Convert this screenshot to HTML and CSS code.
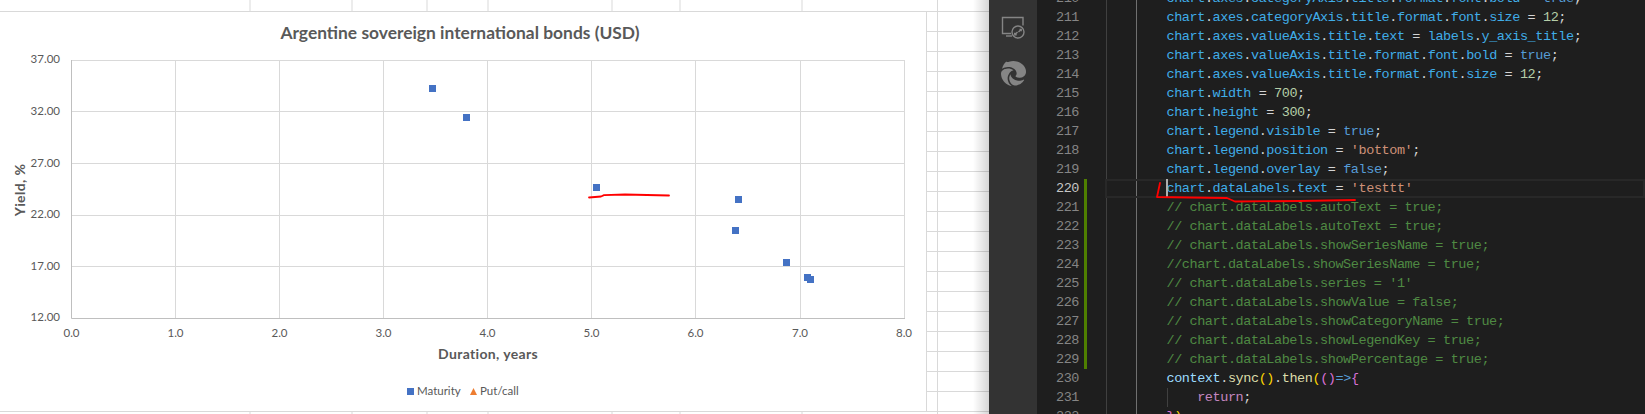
FILE: index.html
```html
<!DOCTYPE html>
<html lang="en">

<head>
    <meta charset="UTF-8">
    <title>Argentine sovereign international bonds</title>
    <link rel="stylesheet" href="styles.css">
</head>

<body>
    <div class="sheet">
        <svg class="sheet-canvas" width="989" height="414" viewBox="0 0 989 414">
            <!-- spreadsheet cells behind the chart -->
            <path class="cell-line" d="M250 0V11M352 0V11M427 0V11M488 0V11M612 0V11M680 0V11M802 0V11
                M250 411V414M352 411V414M427 411V414M488 411V414M612 411V414M680 411V414M802 411V414
                M937.5 0V414M926.5 11V411
                M0 11.5H989M0 411.5H989
                M926 31.5H989M926 51.5H989M926 71.5H989M926 91.5H989M926 111.5H989
                M926 131.5H989M926 151.5H989M926 171.5H989M926 191.5H989M926 211.5H989
                M926 231.5H989M926 251.5H989M926 271.5H989M926 291.5H989M926 311.5H989
                M926 331.5H989M926 351.5H989M926 371.5H989M926 391.5H989" />

            <text class="chart-title" x="460" y="39">Argentine sovereign international bonds (USD)</text>

            <path class="grid-line" d="M175.5 60V318M279.5 60V318M383.5 60V318M487.5 60V318M591.5 60V318M695.5 60V318M800.5 60V318M904.5 60V318
                M71 60.5H905M71 111.5H905M71 163.5H905M71 215.5H905M71 266.5H905" />
            <path class="axis-line" d="M71.5 60V318.5H905" />

            <g class="tick-y">
                <text x="60" y="63">37.00</text>
                <text x="60" y="115">32.00</text>
                <text x="60" y="167">27.00</text>
                <text x="60" y="218">22.00</text>
                <text x="60" y="270">17.00</text>
                <text x="60" y="321">12.00</text>
            </g>
            <g class="tick-x">
                <text x="71.5" y="337">0.0</text>
                <text x="175.5" y="337">1.0</text>
                <text x="279.5" y="337">2.0</text>
                <text x="383.5" y="337">3.0</text>
                <text x="487.5" y="337">4.0</text>
                <text x="591.5" y="337">5.0</text>
                <text x="695.5" y="337">6.0</text>
                <text x="800" y="337">7.0</text>
                <text x="904" y="337">8.0</text>
            </g>

            <text class="axis-title" x="488" y="359">Duration, years</text>
            <text class="axis-title" transform="translate(25 190) rotate(-90)">Yield, %</text>

            <g class="marker">
                <rect x="429" y="85" width="7" height="7" />
                <rect x="463" y="114" width="7" height="7" />
                <rect x="593" y="184" width="7" height="7" />
                <rect x="735" y="196" width="7" height="7" />
                <rect x="732" y="227" width="7" height="7" />
                <rect x="783" y="259" width="7" height="7" />
                <rect x="804" y="274" width="7" height="7" />
                <rect x="807" y="276" width="7" height="7" />
            </g>

            <rect class="legend-key" x="407" y="388" width="7" height="7" />
            <text class="legend-text" x="417" y="395">Maturity</text>
            <path class="legend-tri" d="M470 395L473.500 388L477 395Z" />
            <text class="legend-text" x="480" y="395">Put/call</text>
        </svg>
        <div class="sheet-shadow"></div>
    </div>

    <aside class="sidebar">
        <svg class="side-remote" width="26" height="26" viewBox="0 0 26 26">
            <path d="M11 18.500H2.500V2.500H23V10.500" />
            <path d="M6 21H12" />
            <circle cx="18" cy="17" r="6" />
            <path d="M15 19.500L17.500 17M21 14.500L18.500 17M19.500 14.500H21.200V16.200M14.800 17.800V19.700H16.700" />
        </svg>
        <svg class="side-edge" width="25" height="25" viewBox="0 0 24 24">
            <path d="M21.86 17.86q.14 0 .25.12.1.13.1.25t-.11.33l-.32.46-.43.53-.44.5q-.21.25-.38.42l-.22.23q-.58.53-1.34 1.04-.76.51-1.6.91-.86.4-1.74.64t-1.67.24q-.9 0-1.69-.28-.8-.28-1.48-.78-.68-.5-1.22-1.17-.53-.66-.92-1.44-.38-.77-.58-1.6-.2-.83-.2-1.67 0-1 .32-1.96.33-.97.87-1.8.14.95.55 1.77.41.82 1.02 1.5.6.68 1.38 1.21.78.54 1.64.9.86.36 1.77.56.92.2 1.8.2 1.12 0 2.18-.24 1.06-.23 2.06-.72l.2-.1.2-.05zm-15.5-1.27q0 1.1.27 2.15.27 1.06.78 2.03.51.96 1.24 1.77.74.82 1.66 1.4-1.47-.2-2.8-.74-1.33-.55-2.48-1.37-1.15-.83-2.08-1.9-.92-1.07-1.58-2.33T.36 14.94Q0 13.54 0 12.06q0-.81.32-1.49.31-.68.83-1.23.53-.55 1.2-.96.66-.4 1.35-.66.74-.27 1.5-.39.78-.12 1.55-.12.7 0 1.42.1.72.12 1.4.35.68.23 1.32.57.63.35 1.16.83-.35 0-.7.07-.33.07-.65.23v-.02q-.63.28-1.2.74-.57.46-1.05 1.04-.48.58-.87 1.26-.38.67-.65 1.39-.27.71-.42 1.44-.15.72-.15 1.38zM11.96.06q1.7 0 3.33.39 1.63.38 3.07 1.15 1.43.77 2.62 1.93 1.18 1.16 1.98 2.7.49.94.76 1.96.28 1 .28 2.08 0 .89-.23 1.7-.24.8-.69 1.48-.45.68-1.1 1.22-.64.53-1.45.88-.54.24-1.11.36-.58.13-1.16.13-.42 0-.97-.03-.54-.03-1.1-.12-.55-.1-1.05-.28-.5-.19-.84-.5-.12-.09-.23-.24-.1-.16-.1-.33 0-.15.16-.35.16-.2.35-.5.2-.28.36-.68.16-.4.16-.95 0-1.06-.4-1.96-.4-.91-1.06-1.64-.66-.74-1.52-1.28-.86-.55-1.79-.89-.84-.3-1.72-.44-.87-.14-1.76-.14-1.55 0-3.06.45-1.5.45-2.69 1.34.43-2.14 1.5-3.94 1.08-1.8 2.58-3.1Q5.8 1.43 7.69.75T11.96.06z" />
        </svg>
    </aside>

    <main class="editor">
        <div class="guide guide-outer"></div>
        <div class="guide guide-active"></div>
        <div class="guide guide-return"></div>

        <div class="lines">
            <div class="line"><span class="num">210</span><span class="gutter"></span><span class="code">        <b class="v">chart</b>.<b class="v">axes</b>.<b class="v">categoryAxis</b>.<b class="v">title</b>.<b class="v">format</b>.<b class="v">font</b>.<b class="v">bold</b> = <b class="k">true</b>;</span></div>
            <div class="line"><span class="num">211</span><span class="gutter"></span><span class="code">        <b class="v">chart</b>.<b class="v">axes</b>.<b class="v">categoryAxis</b>.<b class="v">title</b>.<b class="v">format</b>.<b class="v">font</b>.<b class="v">size</b> = <b class="n">12</b>;</span></div>
            <div class="line"><span class="num">212</span><span class="gutter"></span><span class="code">        <b class="v">chart</b>.<b class="v">axes</b>.<b class="v">valueAxis</b>.<b class="v">title</b>.<b class="v">text</b> = <b class="v">labels</b>.<b class="v">y_axis_title</b>;</span></div>
            <div class="line"><span class="num">213</span><span class="gutter"></span><span class="code">        <b class="v">chart</b>.<b class="v">axes</b>.<b class="v">valueAxis</b>.<b class="v">title</b>.<b class="v">format</b>.<b class="v">font</b>.<b class="v">bold</b> = <b class="k">true</b>;</span></div>
            <div class="line"><span class="num">214</span><span class="gutter"></span><span class="code">        <b class="v">chart</b>.<b class="v">axes</b>.<b class="v">valueAxis</b>.<b class="v">title</b>.<b class="v">format</b>.<b class="v">font</b>.<b class="v">size</b> = <b class="n">12</b>;</span></div>
            <div class="line"><span class="num">215</span><span class="gutter"></span><span class="code">        <b class="v">chart</b>.<b class="v">width</b> = <b class="n">700</b>;</span></div>
            <div class="line"><span class="num">216</span><span class="gutter"></span><span class="code">        <b class="v">chart</b>.<b class="v">height</b> = <b class="n">300</b>;</span></div>
            <div class="line"><span class="num">217</span><span class="gutter"></span><span class="code">        <b class="v">chart</b>.<b class="v">legend</b>.<b class="v">visible</b> = <b class="k">true</b>;</span></div>
            <div class="line"><span class="num">218</span><span class="gutter"></span><span class="code">        <b class="v">chart</b>.<b class="v">legend</b>.<b class="v">position</b> = <b class="s">'bottom'</b>;</span></div>
            <div class="line"><span class="num">219</span><span class="gutter"></span><span class="code">        <b class="v">chart</b>.<b class="v">legend</b>.<b class="v">overlay</b> = <b class="k">false</b>;</span></div>
            <div class="line line-current"><span class="num">220</span><span class="gutter added"></span><span class="code">        <b class="cursor"></b><b class="v">chart</b>.<b class="v">dataLabels</b>.<b class="v">text</b> = <b class="s">'testtt'</b></span></div>
            <div class="line"><span class="num">221</span><span class="gutter added"></span><span class="code c">        // chart.dataLabels.autoText = true;</span></div>
            <div class="line"><span class="num">222</span><span class="gutter added"></span><span class="code c">        // chart.dataLabels.autoText = true;</span></div>
            <div class="line"><span class="num">223</span><span class="gutter added"></span><span class="code c">        // chart.dataLabels.showSeriesName = true;</span></div>
            <div class="line"><span class="num">224</span><span class="gutter added"></span><span class="code c">        //chart.dataLabels.showSeriesName = true;</span></div>
            <div class="line"><span class="num">225</span><span class="gutter added"></span><span class="code c">        // chart.dataLabels.series = '1'</span></div>
            <div class="line"><span class="num">226</span><span class="gutter added"></span><span class="code c">        // chart.dataLabels.showValue = false;</span></div>
            <div class="line"><span class="num">227</span><span class="gutter added"></span><span class="code c">        // chart.dataLabels.showCategoryName = true;</span></div>
            <div class="line"><span class="num">228</span><span class="gutter added"></span><span class="code c">        // chart.dataLabels.showLegendKey = true;</span></div>
            <div class="line"><span class="num">229</span><span class="gutter added"></span><span class="code c">        // chart.dataLabels.showPercentage = true;</span></div>
            <div class="line"><span class="num">230</span><span class="gutter"></span><span class="code">        <b class="ctx">context</b>.<b class="f">sync</b><b class="b1">()</b>.<b class="f">then</b><b class="b1">(</b><b class="b2">()</b><b class="k">=&gt;</b><b class="b2">{</b></span></div>
            <div class="line"><span class="num">231</span><span class="gutter"></span><span class="code">            <b class="r">return</b>;</span></div>
            <div class="line"><span class="num">232</span><span class="gutter"></span><span class="code">        <b class="b2">}</b><b class="b1">)</b></span></div>
        </div>
    </main>

    <!-- red pen marks drawn over the screenshot -->
    <svg class="pen" width="1645" height="414" viewBox="0 0 1645 414">
        <path d="M589 197.500L601 196.500L604 195.200L625 194.500L669 195.500" />
        <path d="M1160 183L1157 197L1190 197.500L1227 198L1235 201.500L1300 201L1355 200" />
    </svg>
</body>

</html>
```

FILE: styles.css
```css
body {
    margin: 0;
    height: 414px;
    display: flex;
    overflow: hidden;
    background: #fff;
    font-family: 'Lato', 'Liberation Sans', sans-serif;
}

.sheet {
    position: relative;
    flex: 0 0 989px;
}

.sheet-canvas {
    display: block;
}

.sheet-shadow {
    position: absolute;
    top: 0;
    right: 0;
    bottom: 0;
    width: 16px;
    background: linear-gradient(to right, rgba(0, 0, 0, 0), rgba(0, 0, 0, 0.16));
}

.cell-line,
.grid-line {
    fill: none;
    stroke: #d9d9d9;
    stroke-width: 1;
}

.axis-line {
    fill: none;
    stroke: #bfbfbf;
    stroke-width: 1;
}

.chart-title {
    fill: #595959;
    font-size: 17.4px;
    font-weight: bold;
    text-anchor: middle;
}

.axis-title {
    fill: #595959;
    font-size: 14px;
    font-weight: bold;
    letter-spacing: 0.35px;
    text-anchor: middle;
}

.tick-y text,
.tick-x text {
    fill: #595959;
    font-size: 11.5px;
}

.tick-y text {
    text-anchor: end;
}

.tick-x text {
    text-anchor: middle;
}

.marker rect,
.legend-key {
    fill: #4472c4;
}

.legend-tri {
    fill: #ed7d31;
}

.legend-text {
    fill: #595959;
    font-size: 11.5px;
}

.sidebar {
    flex: 0 0 48px;
    background: #333;
    display: flex;
    flex-direction: column;
    align-items: center;
    padding-top: 15px;
    gap: 20px;
    box-sizing: border-box;
}

.side-remote path,
.side-remote circle {
    fill: none;
    stroke: #858585;
    stroke-width: 1.4;
}

.side-remote circle {
    fill: #333;
}

.side-edge path {
    fill: #858585;
}

.editor {
    position: relative;
    flex: 1;
    background: #1e1e1e;
    color: #d4d4d4;
    font-family: 'Liberation Mono', monospace;
    font-size: 13.5px;
    letter-spacing: -0.42px;
    overflow: hidden;
}

.lines {
    margin-top: -11px;
}

.line {
    display: flex;
    height: 19px;
    line-height: 19px;
}

.num {
    flex: 0 0 42px;
    text-align: right;
    color: #858585;
}

.gutter {
    flex: 0 0 3px;
    margin-left: 5px;
    margin-right: 18px;
}

.added {
    background: #4f7f00;
}

.code {
    flex: 1;
    white-space: pre;
    position: relative;
}

.code b {
    font-weight: normal;
}

.line-current .num {
    color: #c6c6c6;
}

.line-current .code {
    box-shadow: inset 0 0 0 2px #282828;
}

.cursor {
    position: absolute;
    top: 0;
    width: 2px;
    height: 19px;
    background: #aeafad;
}

.v { color: #40ade8; }
.k { color: #569cd6; }
.n { color: #b5cea8; }
.s { color: #ce9178; }
.c { color: #4f8a43; }
.f { color: #dcdcaa; }
.r { color: #c586c0; }
.ctx { color: #9cdcfe; }
.b1 { color: #ffd700; }
.b2 { color: #da70d6; }

.guide {
    position: absolute;
    top: 0;
    bottom: 0;
    width: 1px;
}

.guide-outer {
    left: 69px;
    background: #404040;
}

.guide-active {
    left: 99px;
    background: #707070;
}

.guide-return {
    left: 130px;
    top: 388px;
    bottom: 7px;
    background: #404040;
}

.pen {
    position: absolute;
    top: 0;
    left: 0;
    pointer-events: none;
}

.pen path {
    fill: none;
    stroke: #f00;
    stroke-width: 1.8;
    stroke-linejoin: round;
    stroke-linecap: round;
}
```
